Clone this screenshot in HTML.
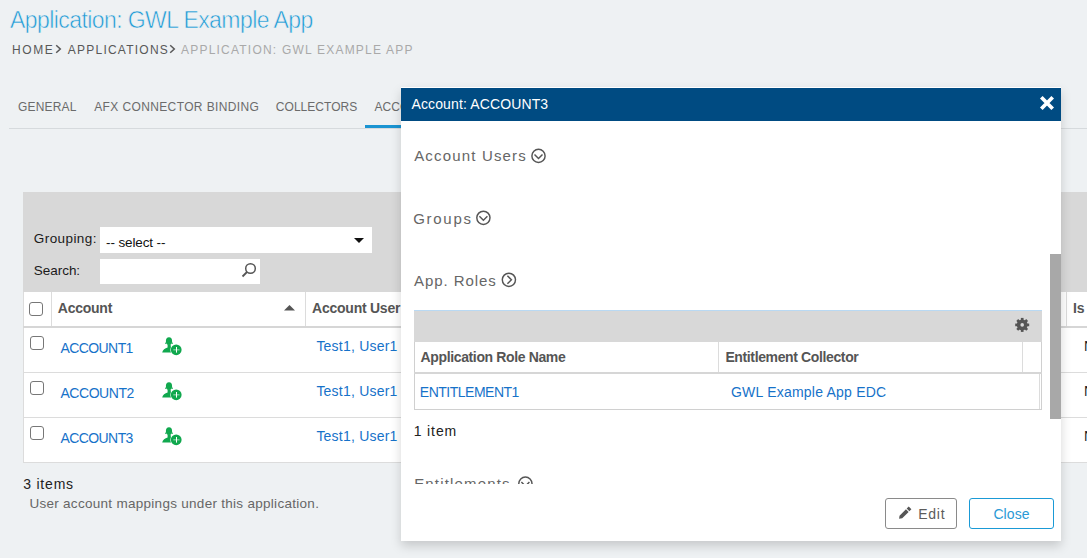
<!DOCTYPE html>
<html><head><meta charset="utf-8">
<style>
*{box-sizing:border-box;margin:0;padding:0}
html,body{width:1087px;height:558px;overflow:hidden;background:#eef1f3;font-family:"Liberation Sans",sans-serif;position:relative}
.a{position:absolute;white-space:nowrap;line-height:1}
.b{position:absolute}
.cb{position:absolute;width:14px;height:14px;border:1.5px solid #777;border-radius:3px;background:#fff}
</style></head><body>
<div id="t_title" class="a " style="left:10.00px;top:9.00px;font-size:23px;letter-spacing:-0.576px;color:#1e9bd6;-webkit-text-stroke:0.55px #eef1f3">Application: GWL Example App</div>
<div id="t_bc1" class="a " style="left:12.00px;top:44.30px;font-size:12px;letter-spacing:1.617px;color:#585858">HOME</div>
<div id="t_bc2" class="a " style="left:67.80px;top:44.30px;font-size:12px;letter-spacing:1.232px;color:#585858">APPLICATIONS</div>
<div id="t_bc3" class="a " style="left:181.00px;top:44.30px;font-size:12px;letter-spacing:1.213px;color:#a9a9a9">APPLICATION: GWL EXAMPLE APP</div>
<svg class="b" style="left:55px;top:44px" width="7" height="10" viewBox="0 0 7 10"><path d="M1.2 1.2 L5.3 5 L1.2 8.8" fill="none" stroke="#585858" stroke-width="1.5"/></svg>
<svg class="b" style="left:169px;top:44px" width="7" height="10" viewBox="0 0 7 10"><path d="M1.2 1.2 L5.3 5 L1.2 8.8" fill="none" stroke="#585858" stroke-width="1.5"/></svg>

<div id="t_tab1" class="a " style="left:18.00px;top:101.20px;font-size:12px;letter-spacing:0.167px;color:#6b6b6b">GENERAL</div>
<div id="t_tab2" class="a " style="left:94.20px;top:101.20px;font-size:12px;letter-spacing:0.380px;color:#6b6b6b">AFX CONNECTOR BINDING</div>
<div id="t_tab3" class="a " style="left:275.80px;top:101.20px;font-size:12px;letter-spacing:0.044px;color:#6b6b6b">COLLECTORS</div>
<div id="t_tab4" class="a " style="left:374.50px;top:101.20px;font-size:12px;letter-spacing:0.044px;color:#6b6b6b">ACCOUNTS</div>
<div class="b" style="left:9px;top:128px;width:1078px;height:1px;background:#d6dadd"></div>
<div class="b" style="left:365px;top:125px;width:40px;height:3px;background:#1a94d2"></div>

<!-- toolbar panel -->
<div class="b" style="left:23px;top:192px;width:1064px;height:100px;background:#d8d8d8"></div>
<div id="t_grp" class="a " style="left:33.80px;top:232.00px;font-size:13.5px;letter-spacing:0.425px;color:#1a1a1a">Grouping:</div>
<div class="b" style="left:100px;top:227px;width:272px;height:26px;background:#fff"></div>
<div id="t_sel" class="a " style="left:106.10px;top:236.00px;font-size:13.5px;letter-spacing:-0.127px;color:#111">-- select --</div>
<svg class="b" style="left:353.7px;top:237.7px" width="10" height="5" viewBox="0 0 10 5"><path d="M0 0 H10 L5 5 Z" fill="#111"/></svg>
<div id="t_srch" class="a " style="left:33.80px;top:264.20px;font-size:13.5px;letter-spacing:-0.033px;color:#1a1a1a">Search:</div>
<div class="b" style="left:100px;top:259px;width:160px;height:25px;background:#fff"></div>
<svg class="b" style="left:240px;top:261px" width="18" height="18" viewBox="0 0 18 18"><circle cx="10.5" cy="7.5" r="4.8" fill="none" stroke="#555" stroke-width="1.5"/><path d="M7 11 L2.5 15.5" stroke="#555" stroke-width="1.8"/></svg>

<!-- main grid -->
<div class="b" style="left:23px;top:292px;width:1064px;height:171px;background:#fff;border-left:1px solid #dcdcdc;border-bottom:1px solid #dcdcdc"></div>
<div class="b" style="left:51px;top:292px;width:1px;height:34px;background:#dcdcdc"></div>
<div class="b" style="left:305px;top:292px;width:1px;height:34px;background:#dcdcdc"></div>
<div class="b" style="left:1066px;top:292px;width:1px;height:34px;background:#dcdcdc"></div>
<div class="b" style="left:23px;top:326px;width:1064px;height:2px;background:#d6d6d6"></div>
<div class="b" style="left:23px;top:372px;width:1064px;height:1px;background:#dcdcdc"></div>
<div class="b" style="left:23px;top:417px;width:1064px;height:1px;background:#dcdcdc"></div>
<div class="cb" style="left:29px;top:302px"></div>
<div id="t_hacc" class="a " style="left:57.80px;top:301.00px;font-size:14px;letter-spacing:-0.250px;font-weight:bold;color:#555">Account</div>
<svg class="b" style="left:283.5px;top:305px" width="11" height="6" viewBox="0 0 11 6"><path d="M0 5.6 H11 L5.5 0 Z" fill="#555"/></svg>
<div id="t_hau" class="a " style="left:312.10px;top:301.00px;font-size:14px;letter-spacing:-0.250px;font-weight:bold;color:#555">Account User</div>
<div id="t_his" class="a " style="left:1073.10px;top:301.00px;font-size:14px;letter-spacing:-0.250px;font-weight:bold;color:#555">Is</div>
<div class="cb" style="left:30px;top:336px"></div>
<div class="cb" style="left:30px;top:381px"></div>
<div class="cb" style="left:30px;top:426px"></div>
<div id="t_acc1" class="a " style="left:60.40px;top:341.40px;font-size:14px;letter-spacing:-0.571px;color:#1672c9">ACCOUNT1</div>
<div id="t_tu1" class="a " style="left:316.40px;top:339.00px;font-size:14px;letter-spacing:0.218px;color:#1672c9">Test1, User1</div>
<div id="t_acc2" class="a " style="left:60.40px;top:386.40px;font-size:14px;letter-spacing:-0.429px;color:#1672c9">ACCOUNT2</div>
<div id="t_tu2" class="a " style="left:316.40px;top:384.00px;font-size:14px;letter-spacing:0.218px;color:#1672c9">Test1, User1</div>
<div id="t_acc3" class="a " style="left:60.40px;top:431.40px;font-size:14px;letter-spacing:-0.571px;color:#1672c9">ACCOUNT3</div>
<div id="t_tu3" class="a " style="left:316.40px;top:429.00px;font-size:14px;letter-spacing:0.218px;color:#1672c9">Test1, User1</div>

<svg class="b" style="left:160px;top:335px" width="24" height="22" viewBox="0 0 24 22"><g fill="#10a84e"><ellipse cx="9" cy="6.1" rx="3.1" ry="3.9"/><path d="M5.3 7.6h1v1.5h-1zM11.7 7.6h1v1.5h-1z"/><path d="M2.2 17.4C2.6 14.8 5 13.2 7.6 12.5L7.6 9.5L10.6 9.5L10.9 12.6L12 13.2L11 17.4Z"/></g><circle cx="16.2" cy="14.8" r="5.9" fill="#fff"/><circle cx="16.2" cy="14.8" r="5.4" fill="#10a84e"/><rect x="16" y="12" width="1" height="5.6" fill="#fff"/><rect x="13.3" y="14.35" width="6.2" height="1" fill="#fff" opacity="0.6"/></svg>
<svg class="b" style="left:160px;top:380px" width="24" height="22" viewBox="0 0 24 22"><g fill="#10a84e"><ellipse cx="9" cy="6.1" rx="3.1" ry="3.9"/><path d="M5.3 7.6h1v1.5h-1zM11.7 7.6h1v1.5h-1z"/><path d="M2.2 17.4C2.6 14.8 5 13.2 7.6 12.5L7.6 9.5L10.6 9.5L10.9 12.6L12 13.2L11 17.4Z"/></g><circle cx="16.2" cy="14.8" r="5.9" fill="#fff"/><circle cx="16.2" cy="14.8" r="5.4" fill="#10a84e"/><rect x="16" y="12" width="1" height="5.6" fill="#fff"/><rect x="13.3" y="14.35" width="6.2" height="1" fill="#fff" opacity="0.6"/></svg>
<svg class="b" style="left:160px;top:425px" width="24" height="22" viewBox="0 0 24 22"><g fill="#10a84e"><ellipse cx="9" cy="6.1" rx="3.1" ry="3.9"/><path d="M5.3 7.6h1v1.5h-1zM11.7 7.6h1v1.5h-1z"/><path d="M2.2 17.4C2.6 14.8 5 13.2 7.6 12.5L7.6 9.5L10.6 9.5L10.9 12.6L12 13.2L11 17.4Z"/></g><circle cx="16.2" cy="14.8" r="5.9" fill="#fff"/><circle cx="16.2" cy="14.8" r="5.4" fill="#10a84e"/><rect x="16" y="12" width="1" height="5.6" fill="#fff"/><rect x="13.3" y="14.35" width="6.2" height="1" fill="#fff" opacity="0.6"/></svg>
<div id="t_n1" class="a " style="left:1084.00px;top:339.25px;font-size:14px;letter-spacing:0.000px;color:#222">N</div>
<div id="t_n2" class="a " style="left:1084.00px;top:384.25px;font-size:14px;letter-spacing:0.000px;color:#222">N</div>
<div id="t_n3" class="a " style="left:1084.00px;top:429.25px;font-size:14px;letter-spacing:0.000px;color:#222">N</div>
<div id="t_3items" class="a " style="left:23.20px;top:477.00px;font-size:14px;letter-spacing:0.800px;color:#222">3 items</div>
<div id="t_user" class="a " style="left:29.40px;top:496.80px;font-size:13.5px;letter-spacing:0.286px;color:#666">User account mappings under this application.</div>

<!-- modal -->
<div class="b" style="left:401px;top:87px;width:660px;height:454px;background:#fff;box-shadow:0 5px 10px rgba(0,0,0,0.17)"></div>
<div class="b" style="left:401px;top:88px;width:660px;height:33px;background:#004b82"></div>
<div id="t_mtitle" class="a " style="left:411.50px;top:96.60px;font-size:14px;letter-spacing:0.125px;color:#fff">Account: ACCOUNT3</div>
<svg class="b" style="left:1038.6px;top:94.6px" width="16" height="16" viewBox="0 0 16 16"><path d="M2.3 2.3 L13.7 13.7 M13.7 2.3 L2.3 13.7" stroke="#fff" stroke-width="3.7"/></svg>

<div id="t_au" class="a " style="left:414.20px;top:148.10px;font-size:15px;letter-spacing:1.167px;color:#666">Account Users</div>
<div id="t_grps" class="a " style="left:413.20px;top:211.00px;font-size:15px;letter-spacing:1.720px;color:#666">Groups</div>
<div id="t_ar" class="a " style="left:414.00px;top:273.30px;font-size:15px;letter-spacing:0.933px;color:#666">App. Roles</div>
<svg class="b" style="left:0;top:0;overflow:visible" width="1" height="1"><circle cx="538.5" cy="155.9" r="6.6" fill="none" stroke="#555" stroke-width="1.45"/><path d="M534.5 154.4 L538.5 158.4 L542.5 154.4" fill="none" stroke="#555" stroke-width="1.45"/></svg>
<svg class="b" style="left:0;top:0;overflow:visible" width="1" height="1"><circle cx="483.4" cy="217.8" r="6.6" fill="none" stroke="#555" stroke-width="1.45"/><path d="M479.4 216.3 L483.4 220.3 L487.4 216.3" fill="none" stroke="#555" stroke-width="1.45"/></svg>
<svg class="b" style="left:0;top:0;overflow:visible" width="1" height="1"><circle cx="508.9" cy="279.8" r="6.6" fill="none" stroke="#555" stroke-width="1.45"/><path d="M507.4 275.8 L511.4 279.8 L507.4 283.8" fill="none" stroke="#555" stroke-width="1.45"/></svg>

<!-- inner grid -->
<div class="b" style="left:414px;top:310px;width:628px;height:1px;background:#b9d9f3"></div>
<div class="b" style="left:414px;top:311px;width:628px;height:31px;background:#d8d8d8"></div>
<div class="b" style="left:414px;top:342px;width:628px;height:68px;background:#fff;border-left:1px solid #d0d0d0;border-right:1px solid #d0d0d0;border-bottom:1px solid #d0d0d0"></div>
<div class="b" style="left:414px;top:372px;width:628px;height:2px;background:#d6d6d6"></div>
<div class="b" style="left:718px;top:342px;width:1px;height:30px;background:#dcdcdc"></div>
<div class="b" style="left:1022px;top:342px;width:1px;height:30px;background:#dcdcdc"></div>
<div class="b" style="left:1039px;top:374px;width:1px;height:35px;background:#dcdcdc"></div>
<div id="t_arn" class="a " style="left:420.60px;top:350.40px;font-size:14px;letter-spacing:-0.370px;font-weight:bold;color:#555">Application Role Name</div>
<div id="t_ec" class="a " style="left:725.40px;top:350.40px;font-size:14px;letter-spacing:-0.370px;font-weight:bold;color:#555">Entitlement Collector</div>
<div id="t_ent1" class="a " style="left:419.80px;top:384.90px;font-size:14px;letter-spacing:-0.491px;color:#1672c9">ENTITLEMENT1</div>
<div id="t_gwl" class="a " style="left:731.00px;top:384.50px;font-size:14px;letter-spacing:0.222px;color:#1672c9">GWL Example App EDC</div>
<svg class="b" style="left:1014px;top:317px" width="16" height="16" viewBox="-8 -8 16 16"><g transform="translate(0.2 -0.1)"><g fill="#555"><rect x="-1.35" y="-7" width="2.7" height="14" transform="rotate(0)"/><rect x="-1.35" y="-7" width="2.7" height="14" transform="rotate(45)"/><rect x="-1.35" y="-7" width="2.7" height="14" transform="rotate(90)"/><rect x="-1.35" y="-7" width="2.7" height="14" transform="rotate(135)"/><circle r="5.4"/></g><circle r="1.8" fill="#d8d8d8"/></g></svg>
<div id="t_1item" class="a " style="left:413.70px;top:423.80px;font-size:14px;letter-spacing:0.880px;color:#222">1 item</div>
<div class="b" style="left:401px;top:121px;width:660px;height:363px;overflow:hidden">
<div style="position:absolute;left:-401px;top:-121px;width:1087px;height:600px">
<div id="t_ents" class="a " style="left:414.20px;top:475.90px;font-size:15px;letter-spacing:1.167px;color:#666">Entitlements</div>
<svg class="b" style="left:0;top:0;overflow:visible" width="1" height="1"><circle cx="525.4" cy="483.6" r="6.6" fill="none" stroke="#555" stroke-width="1.45"/><path d="M521.4 482.1 L525.4 486.1 L529.4 482.1" fill="none" stroke="#555" stroke-width="1.45"/></svg>
</div></div>

<!-- scrollbar -->
<div class="b" style="left:1050px;top:254px;width:11px;height:165px;background:#a8a8a8"></div>

<!-- buttons -->
<div class="b" style="left:885px;top:498px;width:72px;height:31px;border:1px solid #8a8a8a;border-radius:3px;background:#fff"></div>
<svg class="b" style="left:898px;top:506px" width="14" height="14" viewBox="0 0 14 14"><path d="M1.1 12.8 L1.53 9.69 L7.96 3.26 L10.64 5.94 L4.21 12.37 Z M8.67 2.55 L10.72 0.5 L13.4 3.18 L11.35 5.23 Z" fill="#555"/></svg>
<div id="t_edit" class="a " style="left:918.20px;top:507.00px;font-size:14px;letter-spacing:0.767px;color:#5c5c5c">Edit</div>
<div class="b" style="left:969px;top:498px;width:85px;height:31px;border:1px solid #1a9ad6;border-radius:3px;background:#fff"></div>
<div id="t_close" class="a " style="left:993.40px;top:507.00px;font-size:14px;letter-spacing:0.100px;color:#2a9ad6">Close</div>
</body></html>
